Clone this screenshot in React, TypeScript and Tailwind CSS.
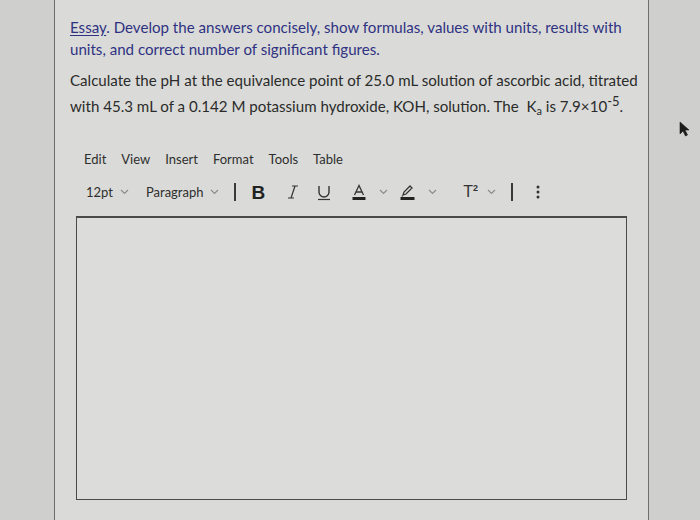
import React from "react";

function Chevron() {
  return (
    <svg width="9" height="6" viewBox="0 0 9 6" className="text-[#8a8a8a]">
      <path d="M1 1l3.5 3.5L8 1" fill="none" stroke="currentColor" strokeWidth="1.1" />
    </svg>
  );
}

function Sep() {
  return <div className="h-[18px] w-[2px] bg-[#3a3a3a]" />;
}

function Toolbar() {
  return (
    <div className="flex items-center pl-[31px] text-[13px] text-[#2e2e2e]">
      <span>12pt</span>
      <span className="ml-[7px]">
        <Chevron />
      </span>
      <span className="ml-[17px]">Paragraph</span>
      <span className="ml-[6px]">
        <Chevron />
      </span>
      <div className="ml-[15px]">
        <Sep />
      </div>
      {/* bold */}
      <span className="ml-[16px] font-['Liberation_Sans',sans-serif] text-[19px] font-bold leading-none text-[#222]">
        B
      </span>
      {/* italic */}
      <svg width="12" height="16" viewBox="0 0 12 16" className="ml-[22px]">
        <path d="M5 2h6M1 14h6M8 2L4 14" fill="none" stroke="#333" strokeWidth="1.2" />
      </svg>
      {/* underline */}
      <svg width="14" height="17" viewBox="0 0 14 17" className="ml-[18px]">
        <path d="M2 2v6a5 5 0 0010 0V2" fill="none" stroke="#333" strokeWidth="1.4" />
        <path d="M1 15.5h12" stroke="#333" strokeWidth="1.2" />
      </svg>
      {/* text color */}
      <svg width="14" height="17" viewBox="0 0 14 17" className="ml-[21px]">
        <path d="M2.5 11L7 1.5 11.5 11M4 8h6" fill="none" stroke="#333" strokeWidth="1.3" />
        <rect x="0.5" y="13" width="13" height="3" fill="#222" />
      </svg>
      <span className="ml-[13px]">
        <Chevron />
      </span>
      {/* highlight */}
      <svg width="16" height="17" viewBox="0 0 16 17" className="ml-[12px]">
        <path d="M3 11l1-3 6-6 2 2-6 6z M3 11l-1 1.5" fill="none" stroke="#333" strokeWidth="1.3" />
        <rect x="0.5" y="13" width="14" height="3" fill="#222" />
      </svg>
      <span className="ml-[12px]">
        <Chevron />
      </span>
      {/* superscript */}
      <span className="ml-[26px] flex items-start font-['Liberation_Sans',sans-serif] text-[16px] leading-none text-[#333]">
        T<span className="text-[9px] font-bold">2</span>
      </span>
      <span className="ml-[9px]">
        <Chevron />
      </span>
      <div className="ml-[15px]">
        <Sep />
      </div>
      <svg width="4" height="16" viewBox="0 0 4 16" className="ml-[23px]">
        <circle cx="2" cy="3" r="1.5" fill="#333" />
        <circle cx="2" cy="8" r="1.5" fill="#333" />
        <circle cx="2" cy="13" r="1.5" fill="#333" />
      </svg>
    </div>
  );
}

export default function App() {
  return (
    <div className="relative flex h-[520px] w-[700px] bg-[#cfd0ce] font-['Lato','Noto_Sans',sans-serif]">
      <div className="ml-[54px] flex h-full w-[595px] flex-col border-x border-[#6e6f6d] bg-[#dadbd8]">
        <div className="pl-[15px] pr-[3px] pt-[16px] text-[15.1px] leading-[22px]">
          <p className="text-[#2f3282]">
            <span className="underline underline-offset-2">Essay</span>. Develop the answers concisely,
            show formulas, values with units, results with units, and correct number of significant
            figures.
          </p>
          <p className="mt-[7px] leading-[26px] text-[#2b2b2b]">
            Calculate the pH at the equivalence point of 25.0 mL solution of ascorbic acid, titrated
            with 45.3 mL of a 0.142 M potassium hydroxide, KOH, solution. The&nbsp;{" "}
            <span>
              K<sub className="text-[11px]">a</sub>
            </span>{" "}
            is 7.9×10<sup className="text-[13px]">-5</sup>.
          </p>
        </div>

        <nav className="mt-[31px] flex gap-[15px] pl-[29px] text-[13px] text-[#2e2e2e]">
          {["Edit", "View", "Insert", "Format", "Tools", "Table"].map((m) => (
            <span key={m}>{m}</span>
          ))}
        </nav>

        <div className="mt-[13px]">
          <Toolbar />
        </div>

        <div className="mx-[21px] mt-[14px] h-[284px] border border-t-2 border-[#4a4a4a] bg-[#dcdcda]" />
      </div>

      {/* mouse pointer */}
      <svg width="12" height="16" viewBox="0 0 12 16" className="absolute left-[679px] top-[121px]">
        <path d="M1 1l0 12 3-3 2.5 5 2-1-2.5-5H10z" fill="#1b1b1b" stroke="#1b1b1b" strokeWidth="0.6" />
      </svg>
    </div>
  );
}
